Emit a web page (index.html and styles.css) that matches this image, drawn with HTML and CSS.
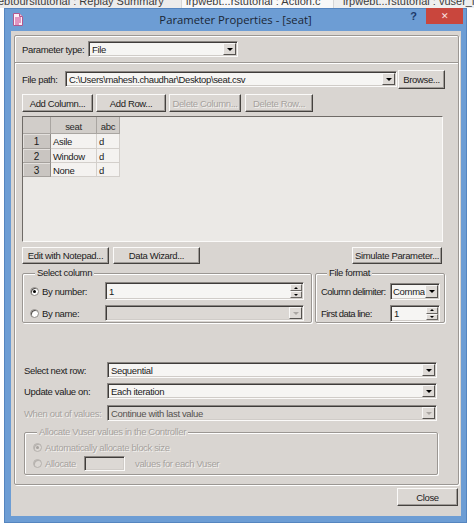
FILE: index.html
```html
<!DOCTYPE html>
<html>
<head>
<meta charset="utf-8">
<title>Parameter Properties - [seat]</title>
<link rel="stylesheet" href="styles.css">
</head>
<body>
<div class="tabs">
  <div class="tab t1"><span>ebtoursitutorial : Replay Summary</span></div>
  <div class="tab t2"><span>lrpwebt...rstutorial : Action.c</span></div>
  <div class="tab t3"><span>lrpwebt...rstutorial : vuser_ini</span></div>
</div>

<div class="window">
  <div class="titlebar">
    <div class="tleft">
      <svg class="appicon" width="10" height="13" viewBox="0 0 10 13">
        <path d="M0.5 0.5 H6.5 L9.5 3.5 V12.5 H0.5 Z" fill="#fbeef6" stroke="#b0588e"/>
        <path d="M6.5 0.5 V3.5 H9.5" fill="#e9c3da" stroke="#b0588e"/>
        <path d="M2 5 H8 M2 7 H8 M2 9 H8 M2 11 H6" stroke="#c83c8c" stroke-width="1"/>
      </svg>
    </div>
    <div class="title">Parameter Properties - [seat]</div>
    <div class="tright">
      <div class="help">?</div>
      <div class="closex">✕</div>
    </div>
  </div>

  <div class="client">
    <div class="panel">
      <div class="typebox">
        <span class="lbl w-type">Parameter type:</span>
        <div class="combo c-type"><span class="val">File</span><span class="drop"></span></div>
      </div>

      <div class="body">
        <div class="row filerow">
          <span class="lbl w-path">File path:</span>
          <div class="combo c-path"><span class="val">C:\Users\mahesh.chaudhar\Desktop\seat.csv</span><span class="drop"></span></div>
          <div class="btn b-browse">Browse...</div>
        </div>

        <div class="row btnrow">
          <div class="btn b-addcol">Add Column...</div>
          <div class="btn b-addrow">Add Row...</div>
          <div class="btn b-delcol off">Delete Column...</div>
          <div class="btn b-delrow off">Delete Row...</div>
        </div>

        <div class="grid">
          <div class="sheet">
            <div class="hc corner"></div>
            <div class="hc">seat</div>
            <div class="hc">abc</div>
            <div class="rn">1</div><div class="dc">Asile</div><div class="dc">d</div>
            <div class="rn">2</div><div class="dc">Window</div><div class="dc">d</div>
            <div class="rn">3</div><div class="dc">None</div><div class="dc">d</div>
          </div>
        </div>

        <div class="row btnrow2">
          <div class="btn b-notepad">Edit with Notepad...</div>
          <div class="btn b-wizard">Data Wizard...</div>
          <div class="btn b-sim">Simulate Parameter...</div>
        </div>

        <div class="row groups">
          <div class="group g-col">
            <div class="cap">Select column</div>
            <div class="grow gr1">
              <span class="radio on"></span>
              <span class="rlbl">By number:</span>
              <div class="spinbox s-num"><span class="val">1</span><span class="spin"><i class="up"></i><i class="dn"></i></span></div>
            </div>
            <div class="grow gr2">
              <span class="radio"></span>
              <span class="rlbl">By name:</span>
              <div class="combo dis c-name"><span class="val"></span><span class="drop"></span></div>
            </div>
          </div>

          <div class="group g-fmt">
            <div class="cap">File format</div>
            <div class="grow fr1">
              <span class="lbl w-fmt">Column delimiter:</span>
              <div class="combo c-delim"><span class="val">Comma</span><span class="drop"></span></div>
            </div>
            <div class="grow fr2">
              <span class="lbl w-fmt">First data line:</span>
              <div class="spinbox s-line"><span class="val">1</span><span class="spin"><i class="up"></i><i class="dn"></i></span></div>
            </div>
          </div>
        </div>

        <div class="lower">
          <div class="lrow lr1">
            <span class="lbl w-low">Select next row:</span>
            <div class="combo c-low"><span class="val">Sequential</span><span class="drop"></span></div>
          </div>
          <div class="lrow lr2">
            <span class="lbl w-low">Update value on:</span>
            <div class="combo c-low"><span class="val">Each iteration</span><span class="drop"></span></div>
          </div>
          <div class="lrow lr3">
            <span class="lbl w-low off">When out of values:</span>
            <div class="combo dis c-low"><span class="val">Continue with last value</span><span class="drop"></span></div>
          </div>

          <div class="group g-alloc">
            <div class="cap off">Allocate Vuser values in the Controller</div>
            <div class="grow ar1">
              <span class="radio dis on"></span>
              <span class="rlbl off">Automatically allocate block size</span>
            </div>
            <div class="grow ar2">
              <span class="radio dis"></span>
              <span class="rlbl off w-alloc">Allocate</span>
              <div class="edit dis e-alloc"></div>
              <span class="rlbl off">values for each Vuser</span>
            </div>
          </div>
        </div>
      </div>
    </div>

    <div class="btn b-close">Close</div>
  </div>
</div>
</body>
</html>
```

FILE: styles.css
```css
* { box-sizing: border-box; }

html, body { margin: 0; }

body {
  width: 474px;
  height: 532px;
  overflow: hidden;
  background: #fff;
  font-family: "Liberation Sans", Arial, sans-serif;
  font-size: 9.5px;
  letter-spacing: -0.35px;
  color: #1b1b1b;
}

/* editor tabs peeking out behind the dialog */
.tabs {
  height: 8px;
  display: flex;
  overflow: hidden;
  font-size: 11px;
  letter-spacing: 0;
  color: #3c3c3c;
}
.tab { height: 8px; white-space: nowrap; overflow: hidden; }
.tab span { display: block; line-height: 12px; margin-top: -5px; }
.t1 { width: 181px; background: #ececec; }
.t1 span { margin-left: -2px; }
.t2 { width: 152px; background: #f8f8f8; padding-left: 4px; border-left: 1px solid #d6d6d6; }
.t3 { flex: 1; background: #efefef; padding-left: 9px; border-left: 1px solid #d6d6d6; }

/* dialog frame */
.window {
  margin-left: 4px;
  width: 463px;
  height: 515px;
  background: #6d9dd4;
  border: 1px solid #5585bf;
  display: flex;
  flex-direction: column;
}

.titlebar {
  height: 22px;
  flex: none;
  display: grid;
  grid-template-columns: 1fr auto 1fr;
  align-items: start;
}
.tleft { padding: 4px 0 0 8px; }
.appicon { display: block; }
.title {
  font-family: "Open Sans", "Liberation Sans", sans-serif;
  font-size: 11.3px;
  letter-spacing: 0;
  line-height: 22px;
  color: #1a2634;
}
.tright { display: flex; justify-content: flex-end; align-items: flex-start; }
.help {
  font-family: "Liberation Sans", sans-serif;
  font-weight: bold;
  font-size: 11px;
  letter-spacing: 0;
  color: #1d3a6a;
  margin: 1px 9px 0 0;
}
.closex {
  width: 37px;
  height: 16px;
  margin: -1px 3px 0 0;
  background: #c9463d;
  color: #fbe3e1;
  font-size: 9px;
  letter-spacing: 0;
  line-height: 16px;
  text-align: center;
}

.client {
  flex: 1;
  margin: 0 5px 6px 6px;
  background: #d9d5d1;
  display: flex;
  flex-direction: column;
  padding: 4px 2px 0 3px;
}

/* etched outer panel */
.panel {
  flex: none;
  height: 450px;
  border: 1px solid #9b9793;
  border-radius: 2px;
  box-shadow: inset 1px 1px 0 #fff, 1px 1px 0 #fff;
}

.typebox {
  height: 27px;
  display: flex;
  align-items: center;
  padding-left: 7px;
  border-bottom: 1px solid #9b9793;
  box-shadow: 0 1px 0 #fff;
}

.body { padding: 0 14px 0 7px; }

.row { display: flex; align-items: center; }

.lbl { flex: none; white-space: nowrap; }
.w-type { width: 66px; }
.w-path { width: 43px; }
.w-fmt { width: 68px; letter-spacing: -0.55px; }
.w-low { width: 83px; }
.off { color: #a6a29e; text-shadow: 1px 1px 0 #f3f1ef; }

/* combo boxes and edits */
.combo, .spinbox, .edit {
  flex: none;
  display: flex;
  align-items: stretch;
  background: #f6f5f3;
  border: 1px solid;
  border-color: #8a8682 #fbfaf9 #fbfaf9 #8a8682;
  box-shadow: inset 1px 1px 0 #3f3c3a, inset -1px -1px 0 #d0ccc8;
}
.combo .val, .spinbox .val {
  flex: 1;
  padding: 0 0 0 3px;
  line-height: 13px;
  white-space: nowrap;
  overflow: hidden;
  align-self: center;
}
.drop {
  flex: none;
  width: 13px;
  margin: 1px 1px 1px 0;
  background: #dedad6;
  border: 1px solid;
  border-color: #f8f7f6 #55524f #55524f #f8f7f6;
  display: flex;
  align-items: center;
  justify-content: center;
}
.drop::after {
  content: "";
  border-left: 3px solid transparent;
  border-right: 3px solid transparent;
  border-top: 3px solid #000;
}
.combo.dis, .edit.dis { background: #dcd8d4; }
.combo.dis .val { color: #55524f; }
.combo.dis .drop::after { border-top-color: #aaa6a2; }

.c-type { width: 150px; height: 16px; }
.c-path { width: 332px; height: 16px; }
.c-name { width: 199px; height: 16px; }
.c-delim { width: 50px; height: 17px; margin-left: 1px; }
.c-delim .val { padding-left: 2px; letter-spacing: -0.3px; }
.c-low { width: 330px; height: 16px; }

.spin {
  flex: none;
  width: 12px;
  margin: 1px 1px 1px 0;
  display: flex;
  flex-direction: column;
}
.spin i {
  flex: 1;
  background: #dedad6;
  border: 1px solid;
  border-color: #f8f7f6 #6a6763 #6a6763 #f8f7f6;
  display: flex;
  align-items: center;
  justify-content: center;
}
.spin .up::after {
  content: "";
  border-left: 2px solid transparent;
  border-right: 2px solid transparent;
  border-bottom: 2px solid #000;
}
.spin .dn::after {
  content: "";
  border-left: 2px solid transparent;
  border-right: 2px solid transparent;
  border-top: 2px solid #000;
}
.s-num { width: 199px; height: 18px; }
.s-line { width: 50px; height: 17px; margin-left: 1px; }

/* push buttons */
.btn {
  flex: none;
  display: flex;
  align-items: center;
  justify-content: center;
  white-space: nowrap;
  background: #dbd7d3;
  border: 1px solid;
  border-color: #fbfaf9 #45423f #45423f #fbfaf9;
  box-shadow: inset -1px -1px 0 #9f9b97;
}

.filerow { margin-top: 6px; height: 20px; }
.b-browse { width: 47px; height: 19px; margin-left: 1px; }

.btnrow { margin-top: 5px; height: 18px; gap: 3px; }
.btnrow .btn { height: 18px; }
.b-addcol { width: 71px; }
.b-addrow { width: 70px; }
.b-delcol { width: 72px; }
.b-delrow { width: 68px; margin-left: 1px; }

/* data sheet */
.grid {
  margin-top: 4px;
  width: 421px;
  height: 126px;
  background: #ebe9e6;
  border: 1px solid;
  border-color: #6f6b67 #fbfaf9 #fbfaf9 #6f6b67;
}
.sheet {
  display: grid;
  grid-template-columns: 28px 46px 23px;
  grid-template-rows: 17px 15px 14px 14px;
  width: max-content;
}
.hc, .rn, .dc {
  line-height: 13px;
  white-space: nowrap;
  overflow: hidden;
}
.hc {
  background: #d1cdc9;
  border-right: 1px solid #a9a5a1;
  border-bottom: 1px solid #a9a5a1;
  text-align: center;
  padding-top: 3px;
  color: #2a2a2a;
}
.rn {
  background: #c9c5c1;
  border-right: 1px solid #8f8b87;
  border-bottom: 1px solid #a5a19d;
  box-shadow: inset 1px 1px 0 #e4e1de;
  text-align: center;
  font-size: 10px;
  letter-spacing: 0;
  padding-top: 1px;
}
.dc {
  background: #f4f2f0;
  border-right: 1px solid #d3cfcb;
  border-bottom: 1px solid #d3cfcb;
  padding: 1px 0 0 2px;
}

.btnrow2 { margin-top: 5px; height: 17px; gap: 4px; }
.btnrow2 .btn { height: 17px; }
.b-notepad { width: 87px; }
.b-wizard { width: 87px; }
.b-sim { width: 90px; margin-left: auto; margin-right: 2px; }

/* group boxes */
.groups { margin-top: 9px; align-items: flex-start; gap: 3px; }
.group {
  flex: none;
  border: 1px solid #9b9793;
  border-radius: 2px;
  box-shadow: inset 1px 1px 0 #fff, 1px 1px 0 #fff;
}
.cap {
  width: max-content;
  line-height: 12px;
  margin: -7px 0 0 5px;
  padding: 0 2px;
  background: #d9d5d1;
}
.g-col { width: 290px; height: 50px; padding-left: 7px; }
.g-fmt { width: 130px; height: 50px; padding-left: 5px; }
.g-fmt .cap { margin-left: 6px; }

.grow { display: flex; align-items: center; }
.gr1 { margin-top: 3px; height: 18px; }
.gr2 { margin-top: 5px; height: 16px; }
.fr1 { margin-top: 4px; height: 17px; }
.fr2 { margin-top: 5px; height: 17px; }

.radio {
  flex: none;
  width: 9px;
  height: 9px;
  border-radius: 50%;
  background: #fff;
  border: 1px solid #8e8a86;
  box-shadow: inset 1px 1px 0 #55524f;
  display: flex;
  align-items: center;
  justify-content: center;
}
.radio.on::after {
  content: "";
  width: 3px;
  height: 3px;
  border-radius: 50%;
  background: #000;
}
.radio.dis { background: #dcd8d4; border-color: #b5b1ad; box-shadow: inset 1px 1px 0 #b5b1ad; }
.radio.dis.on::after { background: #a6a29e; }
.rlbl { margin-left: 3px; white-space: nowrap; }
.gr1 .rlbl, .gr2 .rlbl { width: 63px; }

.lower { padding-left: 2px; }
.lrow { display: flex; align-items: center; height: 16px; }
.lr1 { margin-top: 39px; }
.lr2 { margin-top: 5px; }
.lr3 { margin-top: 6px; }

.g-alloc { margin-top: 11px; width: 414px; height: 43px; padding-left: 8px; }
.g-alloc .cap { margin-left: 4px; }
.ar1 { margin-top: 2px; height: 14px; }
.ar2 { margin-top: 2px; height: 15px; }
.w-alloc { width: 39px; }
.e-alloc { width: 41px; height: 15px; margin-right: 7px; }

.b-close {
  width: 61px;
  height: 18px;
  margin: 3px 1px 0 0;
  align-self: flex-end;
}
```
